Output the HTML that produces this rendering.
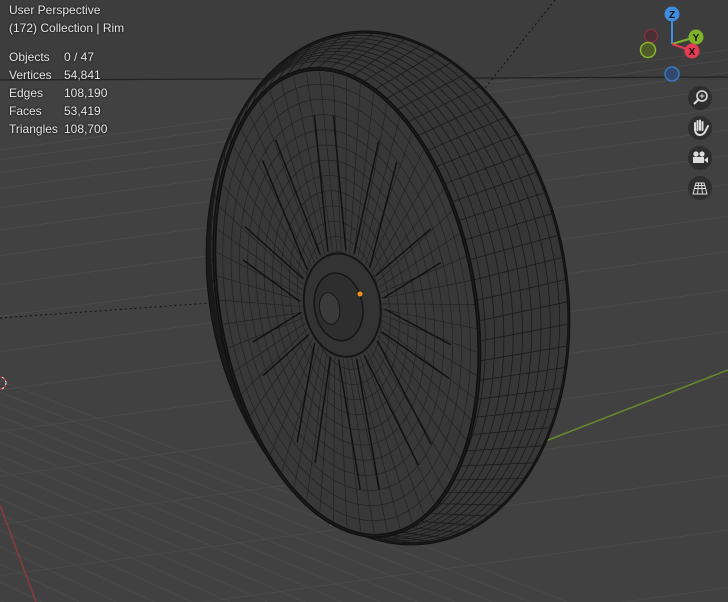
<!DOCTYPE html>
<html><head><meta charset="utf-8"><style>
html,body{margin:0;padding:0;background:#3d3d3d;width:728px;height:602px;overflow:hidden;position:relative}
.t{position:absolute;font-family:"Liberation Sans",sans-serif;font-size:12px;color:#e6e6e6;text-shadow:0 0 2px #000;white-space:nowrap}
</style></head><body>
<svg id="s" width="728" height="602" style="position:absolute;left:0;top:0;display:block">
<rect width="728" height="602" fill="#3d3d3d"/>
<rect y="80" width="728" height="522" fill="#414141"/>
<g id="grid" stroke="#505050" stroke-width="1"></g>
<line x1="0" y1="80" x2="728" y2="77" stroke="#222" stroke-width="1.2"/>
<line x1="330" y1="525" x2="728" y2="370" stroke="#6a8a2a" stroke-width="1.5"/>
<line x1="0" y1="505" x2="36" y2="602" stroke="#8a3a3a" stroke-width="1.5"/>
<line x1="0" y1="318" x2="350" y2="293" stroke="#111" stroke-dasharray="2,3"/>
<line x1="555" y1="0" x2="420" y2="170" stroke="#111" stroke-dasharray="2,3"/>
<g transform="rotate(-10 388 288)">
<ellipse cx="388" cy="288" rx="178" ry="258" fill="#363636" stroke="#111" stroke-width="3"/>
<g id="tread" fill="none" stroke="#1a1a1a" stroke-width="0.8"></g>
<ellipse cx="345" cy="295" rx="128" ry="236" fill="#383838" stroke="#111" stroke-width="4"/>
<g id="rim" fill="none" stroke="#222" stroke-width="0.7"></g>
<ellipse cx="340" cy="297" rx="38" ry="52" fill="#333" stroke="#151515" stroke-width="2"/>
<ellipse cx="336" cy="298" rx="24" ry="34" fill="#2e2e2e" stroke="#151515" stroke-width="1.5"/>
<ellipse cx="327" cy="298" rx="10" ry="16" fill="#3a3a3a" stroke="#151515"/>
</g>
<circle cx="360" cy="294" r="2.5" fill="#f0901a"/>
<circle cx="0" cy="383" r="6" fill="none" stroke="#fff" stroke-dasharray="3,2"/>
<circle cx="0" cy="383" r="6" fill="none" stroke="#c33" stroke-dasharray="3,2" stroke-dashoffset="3"/>
<line x1="672" y1="44" x2="672" y2="14" stroke="#3d8ee0" stroke-width="2"/>
<line x1="672" y1="44" x2="696" y2="37" stroke="#7fb12a" stroke-width="2"/>
<line x1="672" y1="44" x2="692" y2="51" stroke="#e23b52" stroke-width="2"/>
<circle cx="651" cy="36" r="6.5" fill="#4a3034" stroke="#8a3040" stroke-width="1.2"/>
<circle cx="648" cy="50" r="7.5" fill="#4e5c2a" stroke="#8ab22c" stroke-width="1.5"/>
<circle cx="672" cy="74" r="7" fill="#2f4a6e" stroke="#3d78c0" stroke-width="1.5"/>
<circle cx="672" cy="14" r="7.5" fill="#3d8ee0"/>
<circle cx="696" cy="37" r="7.5" fill="#7fb12a"/>
<circle cx="692" cy="51" r="7.5" fill="#e23b52"/>
<text x="672" y="18" font-family="Liberation Sans" font-size="10" font-weight="bold" text-anchor="middle" fill="#111">Z</text>
<text x="696" y="41" font-family="Liberation Sans" font-size="10" font-weight="bold" text-anchor="middle" fill="#111">Y</text>
<text x="692" y="55" font-family="Liberation Sans" font-size="10" font-weight="bold" text-anchor="middle" fill="#111">X</text>
<circle cx="700" cy="98" r="12" fill="#2e2e2e"/>
<circle cx="702" cy="96" r="5" fill="none" stroke="#ddd" stroke-width="1.6"/><line x1="698" y1="100" x2="694" y2="104" stroke="#ddd" stroke-width="2"/>
<line x1="699.5" y1="96" x2="704.5" y2="96" stroke="#ddd"/><line x1="702" y1="93.5" x2="702" y2="98.5" stroke="#ddd"/>
<circle cx="700" cy="128" r="12" fill="#2e2e2e"/>
<path d="M695 130 v-7 M697.5 130 v-9 M700 130 v-9.5 M702.5 130 v-8 M695 128 q0 7 5 7 q4 0 6 -5 l2 -4" stroke="#ddd" stroke-width="2" fill="none" stroke-linecap="round"/>
<circle cx="700" cy="158" r="12" fill="#2e2e2e"/>
<circle cx="696" cy="154" r="2.6" fill="#ddd"/><circle cx="702" cy="154" r="2.6" fill="#ddd"/>
<rect x="693" y="157" width="11" height="6" fill="#ddd"/><path d="M704 160 l4 -3 v6 z" fill="#ddd"/>
<circle cx="700" cy="188" r="12" fill="#2e2e2e"/>
<path d="M693 194 l3 -11 h8 l3 11 z M694.5 188.5 h11 M695.5 185.5 h9 M698.5 183 l-1 11 M701.5 183 l1 11" stroke="#ddd" stroke-width="1" fill="none"/>
</svg>
<div class="t" style="left:9px;top:3px">User Perspective</div>
<div class="t" style="left:9px;top:21px">(172) Collection | Rim</div>
<div class="t" style="left:9px;top:50px">Objects</div><div class="t" style="left:64px;top:50px">0 / 47</div>
<div class="t" style="left:9px;top:68px">Vertices</div><div class="t" style="left:64px;top:68px">54,841</div>
<div class="t" style="left:9px;top:86px">Edges</div><div class="t" style="left:64px;top:86px">108,190</div>
<div class="t" style="left:9px;top:104px">Faces</div><div class="t" style="left:64px;top:104px">53,419</div>
<div class="t" style="left:9px;top:122px">Triangles</div><div class="t" style="left:64px;top:122px">108,700</div>
<script>
var NS="http://www.w3.org/2000/svg";
function el(p,t,a){var e=document.createElementNS(NS,t);for(var k in a)e.setAttribute(k,a[k]);p.appendChild(e);}
var g=document.getElementById('grid');
for(var i=-30;i<30;i++){el(g,'line',{x1:-2000,y1:-400,x2:i*60+360,y2:1200,'stroke-opacity':0.6});}
for(var j=0;j<25;j++){var y=90+j*j*1.6+j*8;el(g,'line',{x1:0,y1:y+60,x2:728,y2:y-40,'stroke-opacity':0.6});}
var tr=document.getElementById('tread');
for(var k=0;k<10;k++){el(tr,'ellipse',{cx:388-k*4.5,cy:288,rx:178-k*5,ry:258-k*2.4});}
for(var a=0;a<360;a+=5){var r=a*Math.PI/180;el(tr,'line',{x1:388+178*Math.cos(r),y1:288+258*Math.sin(r),x2:345+128*Math.cos(r),y2:295+236*Math.sin(r)});}
var rm=document.getElementById('rim');
for(var k=0;k<14;k++){var f=1-k*0.065;el(rm,'ellipse',{cx:345-k*0.3,cy:295,rx:128*f,ry:236*f});}
for(var a=0;a<360;a+=6){var r=a*Math.PI/180;el(rm,'line',{x1:340+40*Math.cos(r),y1:297+54*Math.sin(r),x2:345+126*Math.cos(r),y2:295+233*Math.sin(r)});}
for(var s=0;s<10;s++){var r=s*36*Math.PI/180;el(rm,'path',{d:'M'+(340+42*Math.cos(r))+' '+(297+56*Math.sin(r))+' L'+(345+100*Math.cos(r-0.12))+' '+(295+190*Math.sin(r-0.12))+' M'+(340+42*Math.cos(r+0.2))+' '+(297+56*Math.sin(r+0.2))+' L'+(345+100*Math.cos(r+0.32))+' '+(295+190*Math.sin(r+0.32)),stroke:'#111','stroke-width':1.5});}
</script>
</body></html>
